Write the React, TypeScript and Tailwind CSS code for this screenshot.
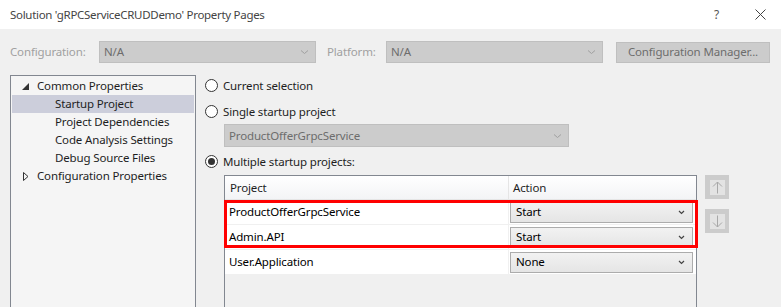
import React from "react";

const Chevron = ({ color = "#a0a0a0" }: { color?: string }) => (
  <svg width="9" height="6" viewBox="0 0 9 6">
    <path d="M1 1.5 L4.5 4.5 L8 1.5" fill="none" stroke={color} strokeWidth="1" />
  </svg>
);

const SmallChevron = () => (
  <svg width="7" height="5" viewBox="0 0 7 5">
    <path d="M1 1 L3.5 3.5 L6 1" fill="none" stroke="#444" strokeWidth="1.2" />
  </svg>
);

const Radio = ({ checked }: { checked?: boolean }) => (
  <div className="w-[13px] h-[13px] rounded-full border border-[#333] bg-white flex items-center justify-center shrink-0">
    {checked && <div className="w-[7px] h-[7px] rounded-full bg-[#333]" />}
  </div>
);

const ActionSelect = ({ value }: { value: string }) => (
  <div className="h-[21px] w-[183px] border border-[#acacac] bg-gradient-to-b from-[#f2f2f2] to-[#e5e5e5] flex items-center justify-between pl-[5px] pr-[7px] text-[#000]">
    <span>{value}</span>
    <SmallChevron />
  </div>
);

export default function App() {
  const rows = [
    { name: "ProductOfferGrpcService", action: "Start" },
    { name: "Admin.API", action: "Start" },
    { name: "User.Application", action: "None" },
  ];
  return (
    <div
      className="w-[781px] h-[307px] overflow-hidden bg-[#f0f0f0] text-[11.5px] tracking-[-0.15px] leading-none text-[#1e1e1e]"
      style={{ fontFamily: '"Noto Sans", "Open Sans", sans-serif' }}
    >
      {/* Title bar */}
      <div className="h-[29px] bg-white flex items-center justify-between pl-[10px] pr-[15px]">
        <span className="text-[#444] tracking-[-0.3px]">Solution 'gRPCServiceCRUDDemo' Property Pages</span>
        <div className="flex items-center gap-[36px] text-[#555]">
          <span className="text-[12px]">?</span>
          <svg width="11" height="11" viewBox="0 0 11 11">
            <path d="M0.5 0.5 L10.5 10.5 M10.5 0.5 L0.5 10.5" stroke="#444" strokeWidth="1" />
          </svg>
        </div>
      </div>

      {/* Toolbar */}
      <div className="flex items-center pl-[10px] mt-[12px] h-[22px]">
        <span className="w-[89px] text-[#a0a0a0]">Configuration:</span>
        <div className="w-[217px] h-[22px] bg-[#cccccc] border border-[#bfbfbf] flex items-center justify-between pl-[4px] pr-[6px] text-[#6d6d6d]">
          <span>N/A</span>
          <Chevron />
        </div>
        <span className="ml-[11px] w-[59px] text-[#a0a0a0]">Platform:</span>
        <div className="w-[217px] h-[22px] bg-[#cccccc] border border-[#bfbfbf] flex items-center justify-between pl-[4px] pr-[6px] text-[#6d6d6d]">
          <span>N/A</span>
          <Chevron />
        </div>
        <div className="ml-[13px] w-[154px] h-[21px] bg-[#cccccc] border border-[#bfbfbf] flex items-center justify-center text-[#6d6d6d]">
          Configuration Manager...
        </div>
      </div>

      {/* Body */}
      <div className="flex mt-[12px] pl-[10px]">
        {/* Tree */}
        <div className="w-[186px] h-[240px] border border-[#828790] bg-[#f5f5f5] pt-[1px] px-[1px]">
          <div className="h-[18px] flex items-center">
            <svg width="7" height="7" viewBox="0 0 7 7" className="ml-[10px]">
              <path d="M7 0 L7 7 L0 7 Z" fill="#333" />
            </svg>
            <span className="ml-[8px]">Common Properties</span>
          </div>
          <div className="h-[18px] flex items-center bg-[#cccedb] pl-[43px]">Startup Project</div>
          <div className="h-[18px] flex items-center pl-[43px]">Project Dependencies</div>
          <div className="h-[18px] flex items-center pl-[43px]">Code Analysis Settings</div>
          <div className="h-[18px] flex items-center pl-[43px]">Debug Source Files</div>
          <div className="h-[18px] flex items-center">
            <svg width="6" height="9" viewBox="0 0 6 9" className="ml-[11px]">
              <path d="M0.5 0.5 L5 4.5 L0.5 8.5 Z" fill="none" stroke="#333" strokeWidth="1" />
            </svg>
            <span className="ml-[8px]">Configuration Properties</span>
          </div>
        </div>

        {/* Right content */}
        <div className="ml-[9px] flex-1 flex flex-col">
          <div className="h-[21px] flex items-center gap-[5px]">
            <Radio />
            <span>Current selection</span>
          </div>
          <div className="h-[25px] mt-[3px] flex items-center gap-[5px]">
            <Radio />
            <span>Single startup project</span>
          </div>
          <div className="ml-[19px] w-[345px] h-[23px] bg-[#cccccc] border border-[#bfbfbf] flex items-center justify-between pl-[4px] pr-[6px] text-[#6d6d6d]">
            <span>ProductOfferGrpcService</span>
            <Chevron />
          </div>
          <div className="h-[21px] mt-[4px] flex items-center gap-[5px]">
            <Radio checked />
            <span>Multiple startup projects:</span>
          </div>

          <div className="flex mt-[3px]">
            {/* Table */}
            <div className="relative ml-[19px] w-[473px] h-[140px] border border-[#828790] border-b-0 bg-[#f0f0f0]">
              <div className="h-[24px] flex bg-gradient-to-b from-white to-[#f3f4f6] border-b border-[#e5e5e5]">
                <div className="w-[284px] border-r border-[#e5e5e5] flex items-center pl-[5px]">Project</div>
                <div className="flex-1 flex items-center pl-[4px]">Action</div>
              </div>
              {rows.map((r) => (
                <div key={r.name} className="h-[25px] flex bg-white border-b border-[#f0f0f0]">
                  <div className="w-[284px] border-r border-[#f0f0f0] flex items-center pl-[4px] text-black">
                    {r.name}
                  </div>
                  <div className="flex items-center pl-[1px]">
                    <ActionSelect value={r.action} />
                  </div>
                </div>
              ))}
              {/* Red annotation box */}
              <div className="absolute left-[-1px] top-[24px] w-[474px] h-[48px] border-[3px] border-[#ff0000] pointer-events-none" />
            </div>

            {/* Up/Down buttons */}
            <div className="ml-[8px] flex flex-col gap-[10px]">
              <div className="w-[24px] h-[24px] bg-[#cccccc] flex items-center justify-center">
                <div className="w-[15px] h-[15px] bg-[#e3e3e3] flex items-center justify-center">
                  <svg width="11" height="13" viewBox="0 0 11 13">
                    <path d="M5.5 12.5 L5.5 1 M1 5.5 L5.5 1 L10 5.5" fill="none" stroke="#a8a8a8" strokeWidth="1" />
                  </svg>
                </div>
              </div>
              <div className="w-[24px] h-[24px] bg-[#cccccc] flex items-center justify-center">
                <div className="w-[15px] h-[15px] bg-[#e3e3e3] flex items-center justify-center">
                  <svg width="11" height="13" viewBox="0 0 11 13">
                    <path d="M5.5 0.5 L5.5 12 M1 7.5 L5.5 12 L10 7.5" fill="none" stroke="#a8a8a8" strokeWidth="1" />
                  </svg>
                </div>
              </div>
            </div>
          </div>
        </div>
      </div>
    </div>
  );
}
